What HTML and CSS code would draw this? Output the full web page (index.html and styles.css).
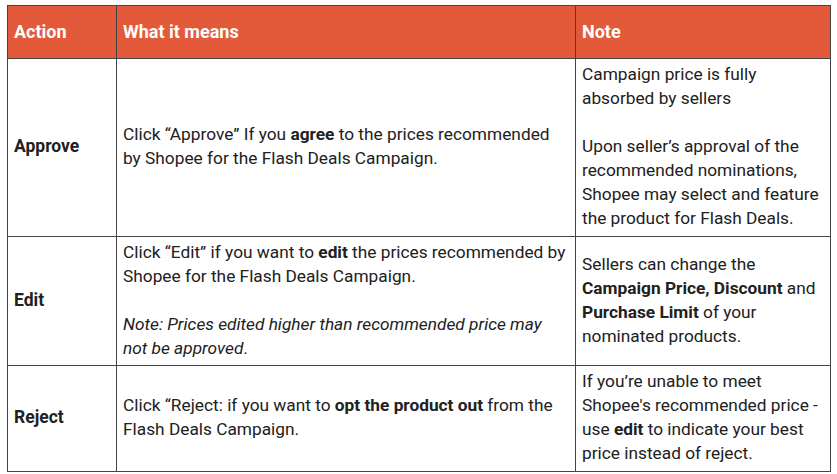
FILE: index.html
```html
<!DOCTYPE html>
<html>
<head>
<meta charset="utf-8">
<link rel="stylesheet" href="styles.css">
</head>
<body>
<div class="wrap">
<table class="tbl">
  <colgroup>
    <col class="c1"><col class="c2"><col class="c3">
  </colgroup>
  <thead>
    <tr class="head"><th>Action</th><th>What it means</th><th>Note</th></tr>
  </thead>
  <tbody>
    <tr class="r1">
      <td class="act">Approve</td>
      <td>Click “Approve” If you <b>agree</b> to the prices recommended<br>by Shopee for the Flash Deals Campaign.</td>
      <td><p>Campaign price is fully<br>absorbed by sellers</p><p class="gap">Upon seller’s approval of the<br>recommended nominations,<br>Shopee may select and feature<br>the product for Flash Deals.</p></td>
    </tr>
    <tr class="r2">
      <td class="act">Edit</td>
      <td><p>Click “Edit” if you want to <b>edit</b> the prices recommended by<br>Shopee for the Flash Deals Campaign.</p><p class="gap"><i>Note: Prices edited higher than recommended price may<br>not be approved</i>.</p></td>
      <td>Sellers can change the<br><b>Campaign Price, Discount</b> and<br><b>Purchase Limit</b> of your<br>nominated products.</td>
    </tr>
    <tr class="r3">
      <td class="act">Reject</td>
      <td>Click “Reject: if you want to <b>opt the product out</b> from the<br>Flash Deals Campaign.</td>
      <td>If you’re unable to meet<br>Shopee's recommended price -<br>use <b>edit</b> to indicate your best<br>price instead of reject.</td>
    </tr>
  </tbody>
</table>
</div>
</body>
</html>
```
FILE: styles.css
```css
html, body { margin: 0; padding: 0; background: #fff; }
.wrap { padding: 5px 0 0 7px; }
.tbl {
  border-collapse: collapse;
  table-layout: fixed;
  width: 823px;
  font-family: Roboto, "Liberation Sans", sans-serif;
  font-size: 17.3px;
  line-height: 24px;
  color: #212121;
}
.c1 { width: 109px; }
.c2 { width: 459px; }
.c3 { width: 255px; }
.tbl th, .tbl td {
  border: 1px solid #444;
  padding: 0 2px 0 6px;
  vertical-align: middle;
  text-align: left;
  white-space: nowrap;
  overflow: hidden;
}
.tbl td { padding-bottom: 3px; }
.tbl th {
  background: #e35a3a;
  color: #fff;
  font-weight: 700;
  font-size: 18px;
}
.tbl td.act { font-weight: 700; font-size: 17.5px; }
.tbl p { margin: 0; }
.tbl p.gap { margin-top: 24px; }
.head { height: 53px; }
.r1 { height: 178px; }
.r2 { height: 129px; }
.r3 { height: 106px; }
b { font-weight: 700; }
```
